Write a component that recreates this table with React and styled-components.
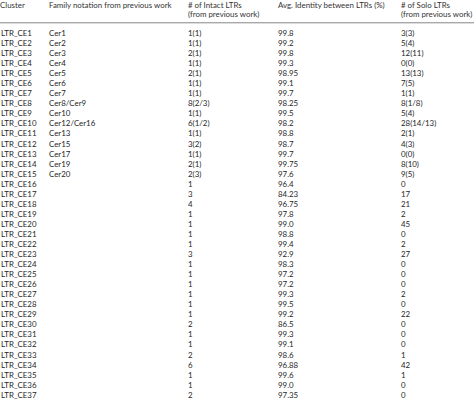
import React from "react";
import styled, { createGlobalStyle } from "styled-components";

const GlobalStyle = createGlobalStyle`
  html, body {
    margin: 0;
    padding: 0;
    background: #ffffff;
    overflow: hidden;
  }
  body {
    font-family: Lato, "Open Sans", sans-serif;
    color: #2a2a2a;
  }
`;

const Table = styled.div`
  display: grid;
  grid-template-columns: 48px 139px 90px 123px 1fr;
  padding: 0 0 0 1px;
  width: 474px;
  box-sizing: border-box;
  font-size: 7.9px;
`;

const HeadCell = styled.div`
  white-space: nowrap;
  line-height: 9px;
  padding: 0.5px 0 3.5px;
  color: #333333;
  margin-left: ${(p) => (p.$shift ? "-1px" : "0")};
`;

const Rule = styled.div`
  grid-column: 1 / -1;
  height: 1px;
  margin-left: -1px;
  background: #a9a9a9;
  box-shadow: 0 1px 0 #dcdcdc;
  margin-bottom: 5px;
`;

const Cell = styled.div`
  white-space: nowrap;
  height: 10.05px;
  line-height: 10.05px;
  color: #262626;
`;

const rows = [
  ["LTR_CE1", "Cer1", "1(1)", "99.8", "3(3)"],
  ["LTR_CE2", "Cer2", "1(1)", "99.2", "5(4)"],
  ["LTR_CE3", "Cer3", "2(1)", "99.8", "12(11)"],
  ["LTR_CE4", "Cer4", "1(1)", "99.3", "0(0)"],
  ["LTR_CE5", "Cer5", "2(1)", "98.95", "13(13)"],
  ["LTR_CE6", "Cer6", "1(1)", "99.1", "7(5)"],
  ["LTR_CE7", "Cer7", "1(1)", "99.7", "1(1)"],
  ["LTR_CE8", "Cer8/Cer9", "8(2/3)", "98.25", "8(1/8)"],
  ["LTR_CE9", "Cer10", "1(1)", "99.5", "5(4)"],
  ["LTR_CE10", "Cer12/Cer16", "6(1/2)", "98.2", "28(14/13)"],
  ["LTR_CE11", "Cer13", "1(1)", "98.8", "2(1)"],
  ["LTR_CE12", "Cer15", "3(2)", "98.7", "4(3)"],
  ["LTR_CE13", "Cer17", "1(1)", "99.7", "0(0)"],
  ["LTR_CE14", "Cer19", "2(1)", "99.75", "8(10)"],
  ["LTR_CE15", "Cer20", "2(3)", "97.6", "9(5)"],
  ["LTR_CE16", "", "1", "96.4", "0"],
  ["LTR_CE17", "", "3", "84.23", "17"],
  ["LTR_CE18", "", "4", "96.75", "21"],
  ["LTR_CE19", "", "1", "97.8", "2"],
  ["LTR_CE20", "", "1", "99.0", "45"],
  ["LTR_CE21", "", "1", "98.8", "0"],
  ["LTR_CE22", "", "1", "99.4", "2"],
  ["LTR_CE23", "", "3", "92.9", "27"],
  ["LTR_CE24", "", "1", "98.3", "0"],
  ["LTR_CE25", "", "1", "97.2", "0"],
  ["LTR_CE26", "", "1", "97.2", "0"],
  ["LTR_CE27", "", "1", "99.3", "2"],
  ["LTR_CE28", "", "1", "99.5", "0"],
  ["LTR_CE29", "", "1", "99.2", "22"],
  ["LTR_CE30", "", "2", "86.5", "0"],
  ["LTR_CE31", "", "1", "99.3", "0"],
  ["LTR_CE32", "", "1", "99.1", "0"],
  ["LTR_CE33", "", "2", "98.6", "1"],
  ["LTR_CE34", "", "6", "96.88", "42"],
  ["LTR_CE35", "", "1", "99.6", "1"],
  ["LTR_CE36", "", "1", "99.0", "0"],
  ["LTR_CE37", "", "2", "97.35", "0"],
];

const headers = [
  ["Cluster", ""],
  ["Family notation from previous work", ""],
  ["# of Intact LTRs", "(from previous work)"],
  ["Avg. Identity between LTRs (%)", ""],
  ["# of Solo LTRs", "(from previous work)"],
];

export default function App() {
  return (
    <>
      <GlobalStyle />
      <Table>
        {headers.map(([a, b], i) => (
          <HeadCell key={i} $shift={i === 0}>
            {a}
            <br />
            {b || "\u00a0"}
          </HeadCell>
        ))}
        <Rule />
        {rows.map((r) =>
          r.map((v, j) => <Cell key={r[0] + j}>{v}</Cell>)
        )}
      </Table>
    </>
  );
}
